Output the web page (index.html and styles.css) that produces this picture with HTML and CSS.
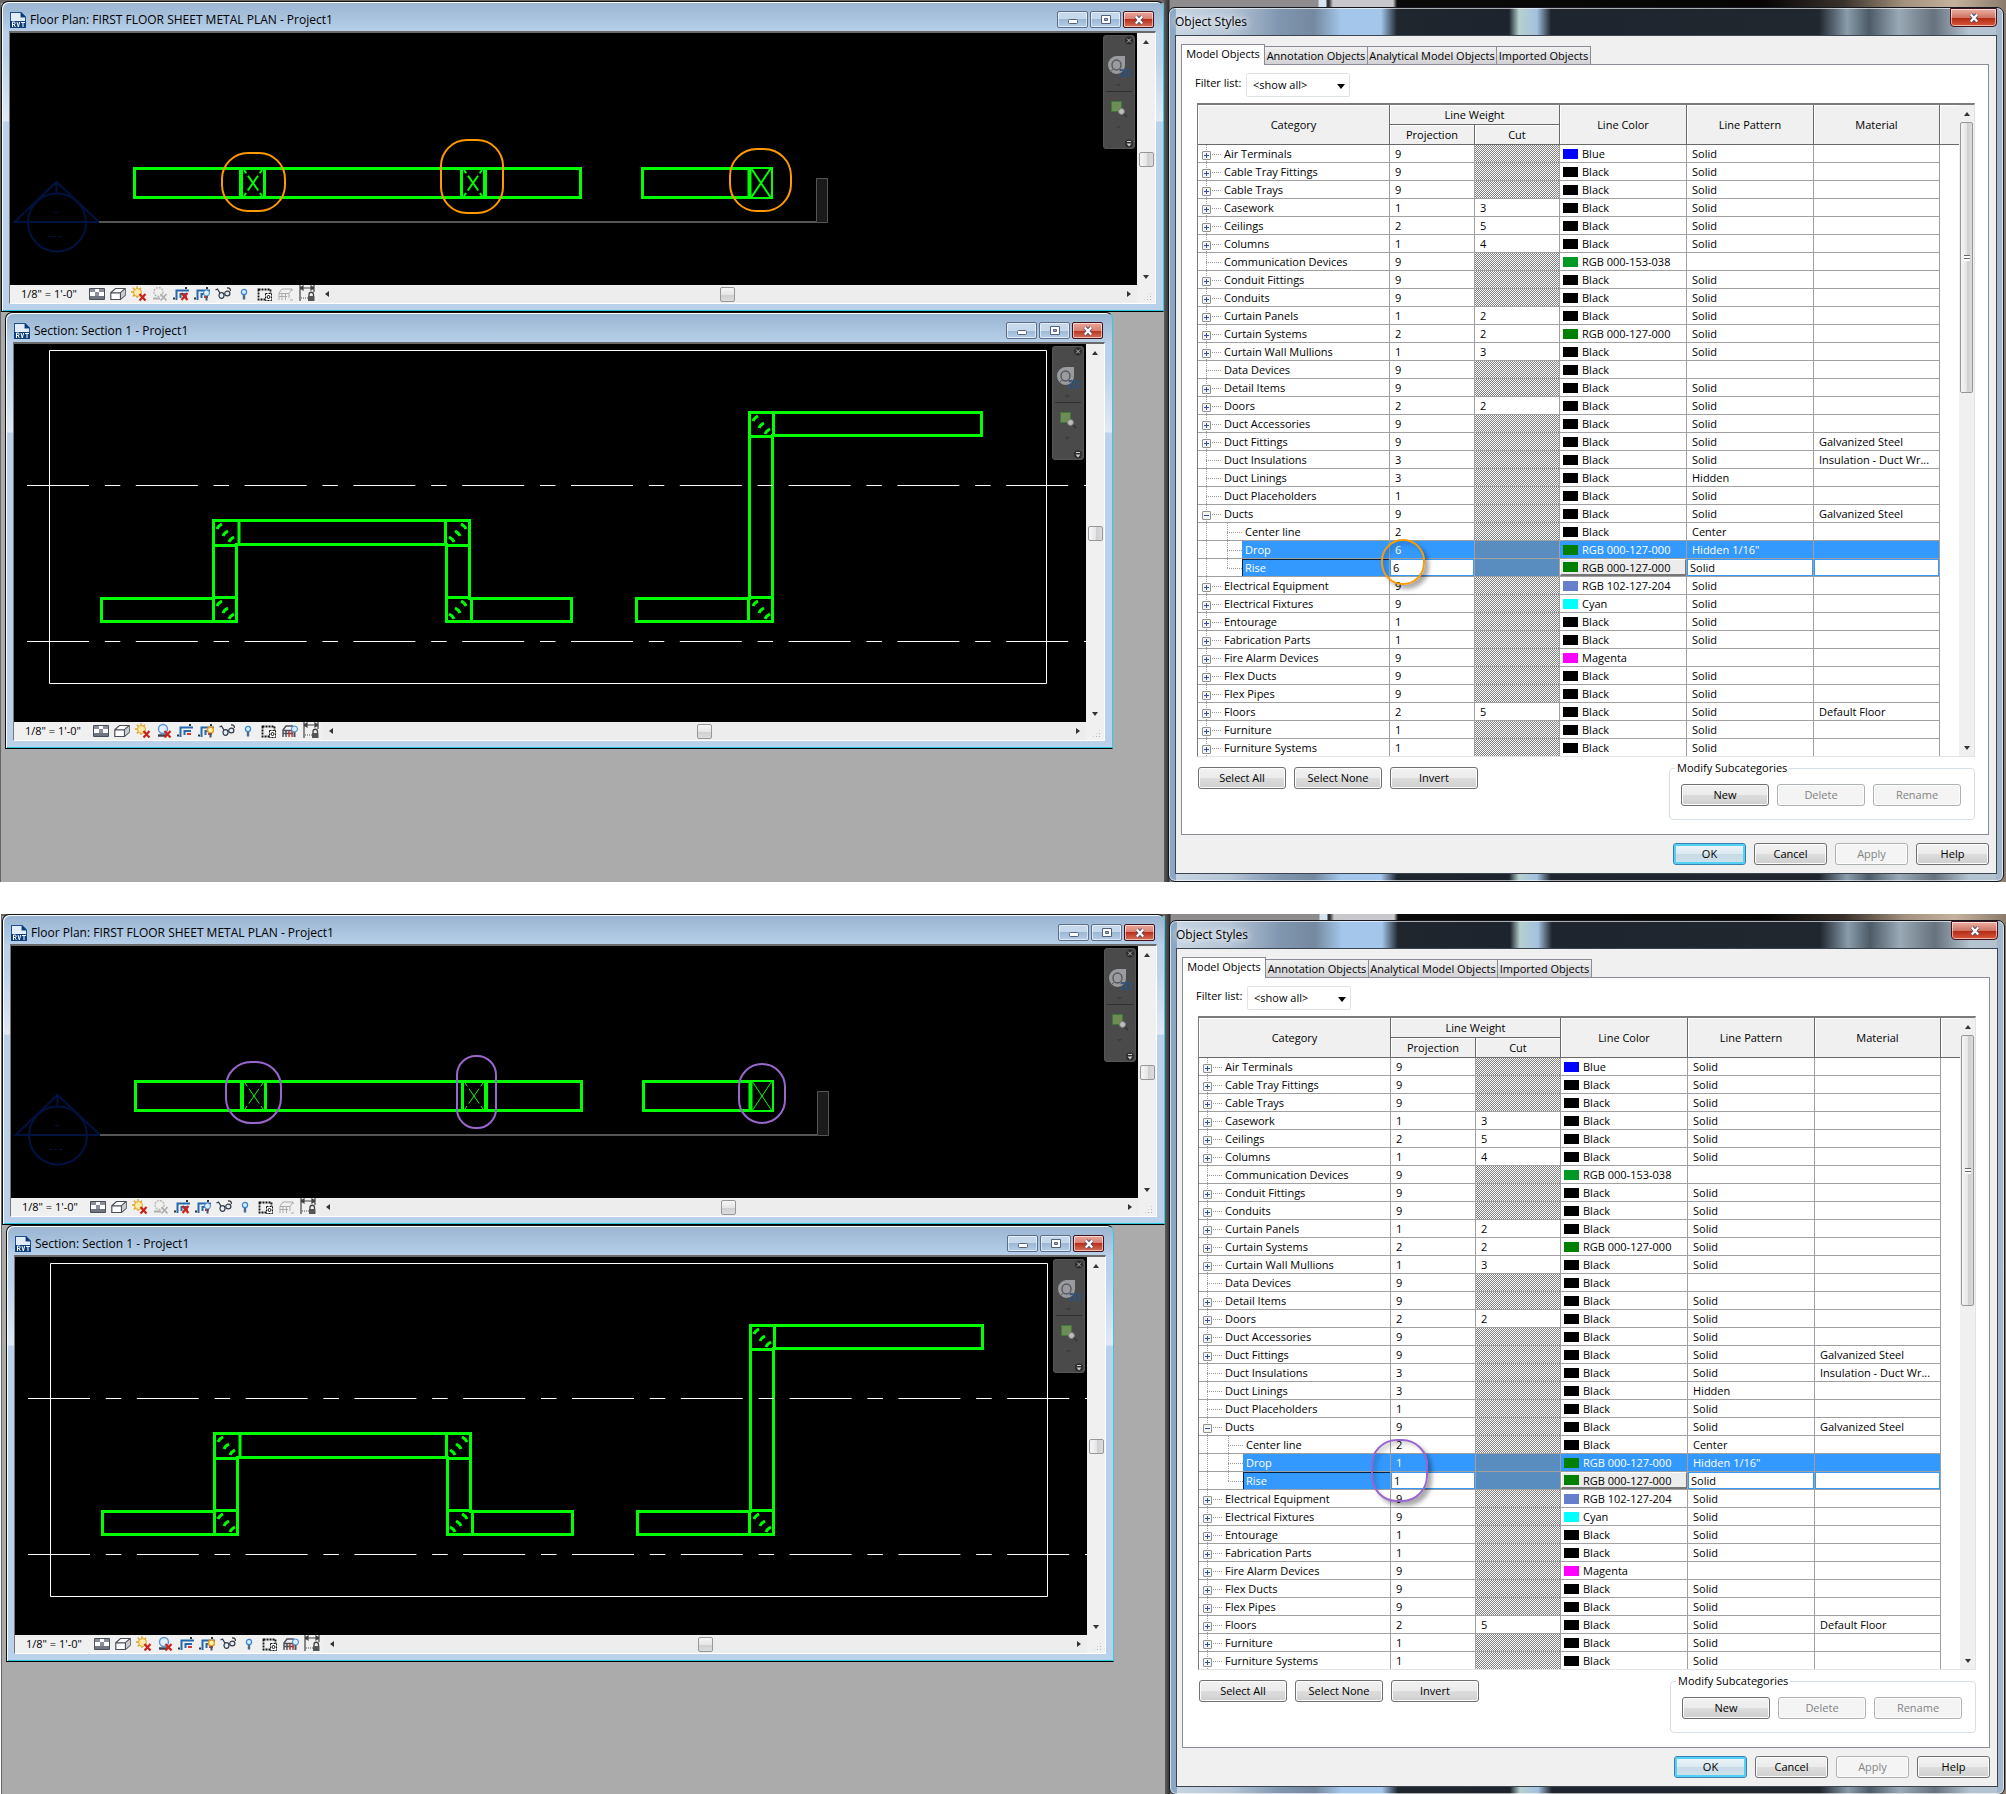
FILE: index.html
```html
<!DOCTYPE html>
<html lang="en">
<head>
<meta charset="utf-8">
<title>Object Styles - Project1</title>
<link rel="stylesheet" href="styles.css">
</head>
<body>
<svg class="defs" aria-hidden="true">
  <symbol id="i-rvt" viewBox="0 0 16 16"><path d="M0 0h11l5 5v11H0z" fill="#1c4f90"/><path d="M1 1h9.500v4.500H15V9H1z" fill="#e4eefa"/><path d="M11 0l5 5h-5z" fill="#0d3a78"/><path d="M0 9h16v7H0z" fill="#103f7e"/><path d="M2.500 15v-5h1.500q1.200 0 1.200 1.200T4 12.500H2.500M4 12.500L5.400 15M7 10l1.300 5L9.600 10M11 10.500h4M13 10.500V15" fill="none" stroke="#fff"/></symbol>
  <symbol id="i-detail" viewBox="0 0 16 16"><path d="M.5 2.500h15v11H.5z" fill="#d8dade" stroke="#4a4e58"/><path d="M1 3h5v3H1zM10 3h5v3h-5zM6 6h4v4H6z" fill="#8a8f99"/><path d="M6 3h4v3H6zM1 6h5v4H1zM10 6h5v4h-5z" fill="#fff"/><path d="M1 10h14v3H1z" fill="#70757f"/></symbol>
  <symbol id="i-cube" viewBox="0 0 16 16"><path d="M.8 6.800L5.500 2.500h9.700v6.800l-4.700 4.200H.8zM.8 6.800h9.700v6.700M10.500 6.800l4.700-4.300" fill="#fff" stroke="#4a4e58" stroke-width="1.200"/><path d="M11 7l4-3.500v5.500l-4 3.500z" fill="#c9ccd2"/></symbol>
  <symbol id="i-sun" viewBox="0 0 16 16"><path d="M6 0v3M0 6h3M1.800 1.800l2 2M10 1.800l-2 2M1.800 10.500l2-2M6 9v3" stroke="#e0a021" stroke-width="1.300"/><circle cx="6.500" cy="6.500" r="4" fill="#ffe9a6" stroke="#e0a021"/><path d="M8.500 8l6 6.500M14.500 8l-6 6.500" stroke="#c8241c" stroke-width="2.200"/></symbol>
  <symbol id="i-shadow-off" viewBox="0 0 16 16"><circle cx="6.500" cy="6" r="4.500" fill="none" stroke="#b5b5b5" stroke-width="1.300" stroke-dasharray="2 1"/><path d="M1 12.500h7M8.500 8l6 6.500M14.500 8l-6 6.500" stroke="#adadad" stroke-width="1.800"/></symbol>
  <symbol id="i-shadow" viewBox="0 0 16 16"><path d="M2 12.500h8" stroke="#3d4350" stroke-width="2.500"/><circle cx="7" cy="6" r="4.500" fill="#dfefff" stroke="#5c94cf" stroke-width="1.400"/><path d="M8.500 8l6 6.500M14.500 8l-6 6.500" stroke="#c8241c" stroke-width="2.200"/></symbol>
  <symbol id="i-crop" viewBox="0 0 16 16"><path d="M0 12.500h2M13 1v2" stroke="#333" stroke-width="2"/><path d="M3.500 14V4.500H16M7.500 12V8H14" fill="none" stroke="#2469ae" stroke-width="2"/><path d="M10 10h4v2h-4z" fill="#d33"/></symbol>
  <symbol id="i-crop-x" viewBox="0 0 16 16"><use href="#i-crop"/><path d="M8.500 7l6 7M14.500 7l-6 7" stroke="#c8241c" stroke-width="2.200"/></symbol>
  <symbol id="i-crop-bulb" viewBox="0 0 16 16"><use href="#i-crop"/><circle cx="12.500" cy="7" r="3" fill="#dcefff" stroke="#4080c0"/><path d="M12.500 10v4.500" stroke="#456" stroke-width="2"/></symbol>
  <symbol id="i-crop-on" viewBox="0 0 16 16"><use href="#i-crop"/><circle cx="12.500" cy="7" r="3" fill="#fff3b0" stroke="#e89a1a" stroke-width="1.500"/><path d="M12.500 10v4.500" stroke="#456" stroke-width="2"/></symbol>
  <symbol id="i-glasses" viewBox="0 0 16 16"><path d="M.5 4l2-1 3 5M12 2q3.500-.5 3.500 3" fill="none" stroke="#333b48" stroke-width="1.300"/><ellipse cx="6.500" cy="9.500" rx="2.500" ry="2.800" fill="#e6eef5" stroke="#333b48" stroke-width="1.200"/><ellipse cx="12.300" cy="7.500" rx="2.600" ry="2.300" fill="#e6eef5" stroke="#333b48" stroke-width="1.200"/></symbol>
  <symbol id="i-bulb" viewBox="0 0 16 16"><circle cx="8" cy="6" r="2.600" fill="#d4ecff" stroke="#3b83ca" stroke-width="1.200"/><path d="M8 9v4.500" stroke="#48698a" stroke-width="2.400"/></symbol>
  <symbol id="i-worksharing" viewBox="0 0 16 16"><path d="M1.500 3.500h12v10h-12z" fill="none" stroke="#111" stroke-width="1.800" stroke-dasharray="2 1"/><path d="M8.500 7.500h6v7h-6z" fill="#fff" stroke="#111" stroke-dasharray="2 1"/><circle cx="11.500" cy="11" r="1.500" fill="none" stroke="#111"/></symbol>
  <symbol id="i-building-off" viewBox="0 0 16 16"><path d="M1 14V7l3-4h10v2M1 7.500h10M4 7.500V14M7.500 7.500V14M11 7.500V12M1 10.500h8M11 7.500L14 3M12 14h3" fill="none" stroke="#ababab"/></symbol>
  <symbol id="i-building" viewBox="0 0 16 16"><path d="M1 14V7l3-4h7M1 7.500h10M4 7.500V14M1 10.500h10" fill="none" stroke="#4a4e58" stroke-width="1.400"/><path d="M7 7.500V14M10 8v6" stroke="#b33" stroke-width="1.400"/><circle cx="12.500" cy="6" r="3" fill="#dcefff" stroke="#3b83ca"/><path d="M12.500 9v5" stroke="#456" stroke-width="2"/></symbol>
  <symbol id="i-dim" viewBox="0 0 16 18"><path d="M1 0v16M15 0v7M1 3h14M1 3l3-2v4zM15 3l-3-2v4z" fill="#444" stroke="#444" stroke-width="1.200"/><path d="M2 13h7" stroke="#555" stroke-dasharray="1 1"/><path d="M10 11V9.500a2.200 2.200 0 014.500 0V11" fill="none" stroke="#444" stroke-width="1.300"/><path d="M9 11h6.500v5H9z" fill="#555"/></symbol>
  <symbol id="i-min" viewBox="0 0 12 12"><rect x="1.500" y="5.500" width="9" height="4" rx="1" fill="#fff" stroke="#53617a"/></symbol>
  <symbol id="i-max" viewBox="0 0 12 12"><path d="M1.500 1.500h9v8h-9z" fill="#fff" stroke="#53617a"/><path d="M4.500 4.500h3v2h-3z" fill="#9bb5d3" stroke="#53617a"/></symbol>
  <symbol id="i-close" viewBox="0 0 12 12"><path d="M3 2.500l6 7M9 2.500l-6 7" stroke="#53506a" stroke-width="4.200"/><path d="M2.800 2.500l6.400 7M9.200 2.500l-6.400 7" stroke="#fff" stroke-width="2.200"/></symbol>
  <symbol id="d-vanes" viewBox="-10 -10 20 20"><path d="M-9 -4q1-3 5-5M-3 3q1-3 5-5M3 9q1-3 5-5" fill="none" stroke="#0f0" stroke-width="3"/></symbol>
  <symbol id="d-nav" viewBox="0 0 32 114">
    <circle cx="26" cy="5.500" r="4" fill="#2c2c2c"/><path d="M24 3.500l4 4M28 3.500l-4 4" stroke="#b5b5b5"/>
    <path d="M13.500 21H22v9a8.500 8.500 0 01-8.500 9A8.500 9 0 015 30a8.500 9 0 018.500-9z" fill="#999b9e"/>
    <ellipse cx="13.500" cy="30" rx="4.500" ry="5" fill="none" stroke="#55585c" stroke-width="1.400"/><path d="M8 36l2.500-2M19 36l-2.500-2" stroke="#55585c"/>
    <path d="M13 49h5l-2.500 3zM13 91h5l-2.500 3z" fill="#3b3d46"/>
    <path d="M3 56.500h26" stroke="#2f2f2f"/>
    <path d="M8.500 66.500h10v10h-10z" fill="#6d8c56" stroke="#3e7a35"/><path d="M20 78l4 4" stroke="#383838" stroke-width="2"/><circle cx="18.500" cy="76.500" r="3" fill="#bdbdbd" stroke="#777"/>
    <circle cx="26" cy="108.500" r="4" fill="#2c2c2c"/><path d="M24 106.500h4" stroke="#ccc"/><path d="M23.500 108.500h5l-2.500 3z" fill="#ccc"/>
  </symbol>
  <symbol id="s-plan" viewBox="10 33 1127 252">
    <g fill="none" stroke="#00123f" stroke-width="2"><path d="M14.500 222H99L56.500 182zM56.500 182v12"/><circle cx="57" cy="222.500" r="29"/><path d="M54 212.500h4M48 236.500h3M53 236.500h3M58 236.500h3" stroke-width="1"/></g>
    <path d="M99 222h717" stroke="#555" stroke-width="2"/>
    <path d="M816.500 178.500h11v44h-11z" fill="#1b1b1b" stroke="#555"/>
    <path d="M134.500 168.500h446v29h-446zM642.500 168.500H748M642.500 197.500H748M642.500 167v32M264.500 169v28M461.500 169v28" fill="none" stroke="#0f0" stroke-width="3"/>
    <path d="M241 168v30M485 168v30M749.500 167v32" stroke="#0f0" stroke-width="4"/>
    <path d="M750 168h22v30h-22z" fill="none" stroke="#0f0" stroke-width="2"/>
  </symbol>
  <symbol id="s-section" viewBox="14 344 1072 378">
    <path d="M49.500 350.500h997v333h-997z" fill="none" stroke="#fff"/>
    <g fill="none" stroke="#0f0" stroke-width="3">
      <path d="M101.500 598.500H213.500V520.500H469.500V598.500H571.500V621.500H446.500V544.500H236.500V621.500H101.500z"/>
      <path d="M213.500 598v23M213.500 597.500h23M213.500 545.500h23M239 520v24M445.500 520v24M446.500 545.500h23M446.500 597.500h23M471.500 598v23"/>
      <path d="M636.500 598.500H749.500V412.500H981.500V435.500H772.500V621.500H636.500zM748.500 598v23M749 597.500h23M749 436.500h23M773.500 412v24"/>
    </g>
    <use href="#d-vanes" x="216" y="523" width="20" height="20"/><use href="#d-vanes" x="216" y="600" width="20" height="20"/>
    <use href="#d-vanes" x="752" y="415" width="20" height="20"/><use href="#d-vanes" x="752" y="600" width="20" height="20"/>
    <g transform="translate(683 0) scale(-1 1)"><use href="#d-vanes" x="216" y="523" width="20" height="20"/><use href="#d-vanes" x="216" y="600" width="20" height="20"/></g>
    <path d="M27 485.500h1059M27 641.500h1059" stroke="#fff" stroke-dasharray="62 15.800 15.500 15.500"/>
  </symbol>
</svg>
<main id="app"></main>
<script src="app.js"></script>
</body>
</html>
```
FILE: styles.css
```css
* { box-sizing: border-box; }
body { margin: 0; background: #fff; color: #000; font: 11px/16px "Open Sans", "Noto Sans", sans-serif; }
button, input, select { font: inherit; color: inherit; margin: 0; padding: 0; }
.defs { position: absolute; width: 0; height: 0; }
#app { display: flex; flex-direction: column; gap: 32px; }
.shot { overflow: hidden; }
.desktop { position: relative; height: 882px; background: linear-gradient(#6b6565 0 3px, transparent 3px), linear-gradient(90deg, #666 0 1px, transparent 1px), #ababab; }
.shot.after .desktop { height: 881px; margin: -1px -1px 0 1px; }

/* drawing windows */
.win { position: absolute; display: flex; flex-direction: column; padding: 0 7px; border: 1px solid #111; border-right-color: #3ec7dc; border-bottom: 1px solid #000; border-radius: 7px 7px 0 0; background: linear-gradient(#99b4d1, #b9d1ea 31px, #b9d1ea 50px, #e0e9f5 119px, #b9d1ea 120px); box-shadow: inset 1px 1px #fff, inset 0 -1px #28c8dc; padding-bottom: 7px; }
.plan { left: 1px; top: 1px; width: 1163px; z-index: 1; }
.section { left: 5px; top: 312px; width: 1108px; }
.titlebar { display: flex; align-items: center; gap: 2px; height: 29px; padding: 6px 2px 0 1px; }
.titlebar h2 { flex: 1; margin: 0 0 0 2px; font-size: 12px; font-weight: 400; }
.titlebar svg { display: block; }
.rvt { width: 16px; height: 16px; }
.wb { display: grid; place-items: center; width: 31px; height: 17px; border: 1px solid #5b6d89; border-radius: 2px; background: linear-gradient(#c6d8ec 0 50%, #9db8d5 50%, #b5cde7); box-shadow: inset 0 0 0 1px #ffffff90; }
.wb svg { width: 12px; height: 12px; }
.wb.close { border-color: #43121b; background: linear-gradient(#e8a598 0, #d98073 50%, #b8301c 50%, #d4705a); }
.client { border: 1px solid #fff; border-top: 2px solid #6a6a6a; border-left-color: #777; background: #f0f0f0; display: grid; grid-template-columns: 1fr 18px; }
.canvas { position: relative; background: #000; }
.canvas > svg { display: block; width: 100%; height: auto; }
.nav { position: absolute; right: 2px; top: 2px; width: 32px; height: 114px; border-radius: 4px; background: #4a4a4a; box-shadow: inset 0 0 0 1px #555; }
.nav svg { display: block; width: 32px; height: 114px; }
.nav span { position: absolute; left: 16px; top: 32px; color: #2b5280; font: 700 10px/14px "Liberation Sans", sans-serif; }
.vbar { display: flex; flex-direction: column; align-items: center; background: #f0f0f0; }
.thumb { border: 1px solid #979797; border-radius: 2px; background: linear-gradient(90deg, #f6f6f6, #e6e6e8 50%, #cfcfd2 55%, #dcdcde); }
.vbar .thumb { width: 15px; height: 15px; }
.arrow { width: 17px; height: 17px; display: grid; place-items: center; border: 0; background: none; }
.arrow::before { content: ""; border: 3px solid transparent; }
.arrow.up::before { border-bottom: 4px solid #333; border-top: 0; }
.arrow.down::before { border-top: 4px solid #333; border-bottom: 0; }
.arrow.left::before { border-right: 4px solid #333; border-left: 0; }
.arrow.right::before { border-left: 4px solid #333; border-right: 0; }
.viewbar { display: flex; align-items: center; height: 18px; padding-left: 11px; }
.scale { width: 68px; white-space: nowrap; }
.tools { display: flex; gap: 5px; width: 229px; }
.tool { width: 16px; height: 18px; border: 0; background: none; }
.tool svg { display: block; width: 16px; height: 16px; }
.tool.wide svg { height: 18px; }
.hbar { flex: 1; display: flex; align-items: center; height: 17px; background: #ededed; }
.hbar .thumb { width: 15px; height: 15px; background: linear-gradient(#f6f6f6, #e6e6e8 50%, #cfcfd2 55%, #dcdcde); }
.grip { align-self: end; justify-self: end; width: 9px; height: 9px; margin: 0 3px 2px 0; background: radial-gradient(circle, #b0b0b0 1px, transparent 1px) 0 0 / 3px 3px; clip-path: polygon(100% 0, 100% 100%, 0 100%); }

/* object styles dialog */
.behind { position: absolute; left: 1164px; right: 0; top: 0; bottom: 0; background: linear-gradient(90deg, #0005 0, #000a 5px, transparent 6px), linear-gradient(90deg, #8e8c8c 0 154px, #d5e2f0 155px 162px, #333 163px 165px, #c8c8cc 169px 229px, #0a0a0a 233px, #060504 600px, #3a322c 680px, #a2917e 740px, #c4b29d 790px, #8a7a6b); }
.dialog { position: absolute; left: 1168px; right: 2px; top: 7px; display: flex; flex-direction: column; padding: 0 6px 7px 6px; border: 1px solid #14181e; border-radius: 7px; box-shadow: inset 0 0 0 1px #ffffffa0; background: linear-gradient(90deg, #8ba7c2 0 7px, transparent 7px calc(100% - 7px), #a4b7ca calc(100% - 7px)), linear-gradient(90deg, #c9d6e3 0, #b5c5d6 60px, #8096b0 110px, #74899f 145px, #a3c6ea 172px, #a3c6ea 212px, #1f262e 228px, #1d242d 340px, #b6d0cf 350px, #a4c1de 368px, #1e252e 382px, #20272f 650px, #8a9cab 678px, #4d5b67 700px, #9aa9b6 730px, #66727d 765px, #b4c3d0 800px); }
.dialog-title { display: flex; justify-content: space-between; align-items: center; height: 27px; }
.dialog-title h2 { margin: 0; font-size: 12px; font-weight: 400; text-shadow: 0 0 6px #fff, 0 0 9px #fff; }
.dialog-title .wb { width: 47px; height: 19px; align-self: flex-start; border-radius: 0 0 4px 4px; background: linear-gradient(#eab0a4 0, #d07565 50%, #b02a12 50%, #d8553a); }
.panel { border: 1px solid #3c4652; background: #f0f0f0; padding: 7px 7px 8px 5px; }
.tabs { display: flex; align-items: flex-end; height: 21px; padding: 0; }
.tab { height: 18px; padding: 0; border: 1px solid #898c95; border-left: 0; border-bottom: 0; background: linear-gradient(#f2f2f2, #e2e2e4 50%, #d2d2d6); white-space: nowrap; position: relative; }
.tab.on { width: 84px; height: 21px; border-left: 1px solid #898c95; background: #fff; margin-bottom: -1px; z-index: 1; padding-bottom: 3px; }
.t2 { width: 103px; } .t3 { width: 129px; } .t4 { width: 94px; }
.page { display: flex; flex-direction: column; border: 1px solid #898c95; background: #fff; padding: 8px 13px 14px 15px; }
.filter { display: flex; align-items: center; gap: 10px; height: 24px; }
.filter label { margin: -4px 0 0 -2px; width: 41px; white-space: nowrap; }
.filter select { appearance: none; width: 104px; height: 24px; padding-left: 6px; border: 1px solid #dfe3ea; border-radius: 2px; background: #fff; }
.filter .pick { position: relative; }
.filter .pick::after { content: ""; position: absolute; right: 5px; top: 11px; border: 4px solid transparent; border-top: 5px solid #000; border-bottom: 0; pointer-events: none; }
.gridframe { display: flex; margin-top: 6px; border: 2px solid #7b7b7b; border-width: 2px 1px 1px 1px; border-right-color: #e3e3e3; border-bottom-color: #e3e3e3; position: relative; }
table { flex: 1; table-layout: fixed; border-collapse: separate; border-spacing: 0; width: 0; }
.c-cat { width: 192px; } .c-w { width: 85px; } .c-col { width: 127px; } .c-mat { width: 126px; }
th { height: 20px; padding: 0; font-weight: 400; line-height: 18px; background: #f0f0f0; border-right: 1px solid #696969; border-bottom: 1px solid #696969; box-shadow: inset 1px 1px #fff; }
th.tail { border-right: 0; }
td { height: 18px; padding: 0 0 0 5px; line-height: 17px; border-right: 1px solid #a0a0a0; border-bottom: 1px solid #a0a0a0; white-space: nowrap; overflow: hidden; text-overflow: ellipsis; }
tr:last-child td { border-bottom: 0; height: 17px; }
td.tail { border: 0; }
td.cat { padding: 0; }
.node { display: flex; align-items: center; height: 17px; padding-left: 8px; background: repeating-linear-gradient(#999 0 1px, #fff 1px 2px) 8px 0 / 1px 100% no-repeat; }
.node.kid { padding-left: 29px; background: repeating-linear-gradient(#999 0 1px, #fff 1px 2px) 8px 0 / 1px 100% no-repeat, repeating-linear-gradient(#999 0 1px, #fff 1px 2px) 29px 0 / 1px 100% no-repeat; }
.node.end { background-size: 1px 100%, 1px 9px; }
.exp { width: 9px; height: 9px; margin: 3px 0 0 -4px; border: 1px solid #919191; border-radius: 1px; background: linear-gradient(#2b4f9c, #2b4f9c) center / 5px 1px no-repeat, linear-gradient(#2b4f9c, #2b4f9c) center / 1px 5px no-repeat, #f4f4f4; }
.exp.open { background: linear-gradient(#2b4f9c, #2b4f9c) center / 5px 1px no-repeat, #f4f4f4; }
.dots { flex: 1; max-width: 15px; height: 1px; margin: 2px 0 0; background: repeating-linear-gradient(90deg, #999 0 1px, #fff 1px 2px); }
.exp + .dots { max-width: 10px; margin-left: 1px; }
.name { padding-left: 3px; flex: 1; }
.exp ~ .name { padding-left: 2px; }
td.na { background: repeating-conic-gradient(#808080 0 25%, #fff 0 50%) 0 0 / 2px 2px; }
.color { padding-left: 3px; }
.color span, .color button { display: flex; align-items: center; gap: 4px; width: 100%; }
.color i { width: 15px; height: 10px; background: var(--c); }
.sel .name, .sel td.fill { background: #39f; color: #fff; }
.sel td.na { background: repeating-conic-gradient(#808080 0 25%, #39f 0 50%) 0 0 / 2px 2px; }
.edit .name { height: 17px; box-shadow: inset 1px 1px #024; }
.edit td { padding: 0; }
.edit input { display: block; width: 100%; height: 17px; border: 1px solid #39f; padding: 0 0 0 2px; background: #fff; outline: 1px solid #39f; outline-offset: 0; }
.edit .color button { height: 17px; padding: 0 0 0 2px; border: 1px solid #fff; border-right-color: #777; border-bottom: 2px solid #777; background: #ececec; color: #000; }
.vscroll { display: flex; flex-direction: column; align-items: center; width: 15px; background: #f0f0f0; }
.vscroll .thumb { width: 13px; height: 271px; display: grid; place-items: center; }
.vscroll .thumb::before { content: ""; width: 6px; height: 6px; background: repeating-linear-gradient(#666 0 1px, #fff 1px 3px); }
.spring { flex: 1; }
.ring { position: absolute; border: 2px solid #f90; box-shadow: 4px 4px 4px #0005, inset 4px 4px 4px #0002; pointer-events: none; }
.ring.orange { left: 183px; top: 434px; width: 44px; height: 46px; border-radius: 22px; }
.ring.purple { left: 172px; top: 421px; width: 57px; height: 63px; border-radius: 26px; border-color: #96c; }
.actions { display: flex; justify-content: space-between; padding: 10px 0 0 1px; }
.row { display: flex; gap: 8px; }
.btn { width: 88px; height: 22px; border: 1px solid #707070; border-radius: 3px; background: linear-gradient(#f2f2f2, #ebebeb 50%, #ddd 50%, #cfcfcf); box-shadow: inset 0 0 0 1px #fcfcfc; line-height: 18px; }
.btn:disabled { border-color: #adb2b5; background: #f4f4f4; color: #838383; }
.group { width: 306px; min-width: 0; height: 60px; margin: -7px 0 0; padding: 8px 12px 0 11px; border: 1px solid #d5dfe5; border-radius: 4px; }
.group legend { margin-left: -6px; padding: 0 2px; line-height: 16px; }
.footer { display: flex; justify-content: flex-end; gap: 8px; padding-top: 8px; }
.footer .btn { width: 73px; }
.footer .ok { border-color: #3c7fb1; box-shadow: inset 0 0 0 2px #55d0f5; background: linear-gradient(#eef5f9, #dceaf2 50%, #c8dae5 50%, #cfe2ec); }
```
FILE: app.js
```js
const K = ['#000', 'Black'], G = ['#007f00', 'RGB 000-127-000'];
// kind: + collapsed, - expanded, . leaf, k child
const rows = [
  ['+', 'Air Terminals', 9, '', ['#00f', 'Blue'], 'Solid'],
  ['+', 'Cable Tray Fittings', 9, '', K, 'Solid'],
  ['+', 'Cable Trays', 9, '', K, 'Solid'],
  ['+', 'Casework', 1, 3, K, 'Solid'],
  ['+', 'Ceilings', 2, 5, K, 'Solid'],
  ['+', 'Columns', 1, 4, K, 'Solid'],
  ['.', 'Communication Devices', 9, '', ['#009926', 'RGB 000-153-038'], ''],
  ['+', 'Conduit Fittings', 9, '', K, 'Solid'],
  ['+', 'Conduits', 9, '', K, 'Solid'],
  ['+', 'Curtain Panels', 1, 2, K, 'Solid'],
  ['+', 'Curtain Systems', 2, 2, G, 'Solid'],
  ['+', 'Curtain Wall Mullions', 1, 3, K, 'Solid'],
  ['.', 'Data Devices', 9, '', K, ''],
  ['+', 'Detail Items', 9, '', K, 'Solid'],
  ['+', 'Doors', 2, 2, K, 'Solid'],
  ['+', 'Duct Accessories', 9, '', K, 'Solid'],
  ['+', 'Duct Fittings', 9, '', K, 'Solid', 'Galvanized Steel'],
  ['.', 'Duct Insulations', 3, '', K, 'Solid', 'Insulation - Duct Wr...'],
  ['.', 'Duct Linings', 3, '', K, 'Hidden'],
  ['.', 'Duct Placeholders', 1, '', K, 'Solid'],
  ['-', 'Ducts', 9, '', K, 'Solid', 'Galvanized Steel'],
  ['k', 'Center line', 2, '', K, 'Center'],
  ['k', 'Drop', 'w', '', G, 'Hidden 1/16"'],
  ['k', 'Rise', 'w', '', G, 'Solid'],
  ['+', 'Electrical Equipment', 9, '', ['#667fcc', 'RGB 102-127-204'], 'Solid'],
  ['+', 'Electrical Fixtures', 9, '', ['#0ff', 'Cyan'], 'Solid'],
  ['+', 'Entourage', 1, '', K, 'Solid'],
  ['+', 'Fabrication Parts', 1, '', K, 'Solid'],
  ['+', 'Fire Alarm Devices', 9, '', ['#f0f', 'Magenta'], ''],
  ['+', 'Flex Ducts', 9, '', K, 'Solid'],
  ['+', 'Flex Pipes', 9, '', K, 'Solid'],
  ['+', 'Floors', 2, 5, K, 'Solid', 'Default Floor'],
  ['+', 'Furniture', 1, '', K, 'Solid'],
  ['+', 'Furniture Systems', 1, '', K, 'Solid'],
];

const use = (id, cls = '') => `<svg class="${cls}" aria-hidden="true"><use href="#${id}"/></svg>`;

function row([kind, name, proj, cut, [hex, color], pattern, material = ''], weight) {
  const sel = proj === 'w', edit = name === 'Rise';
  const exp = kind === '+' || kind === '-' ? `<button class="exp ${kind === '-' ? 'open' : ''}" aria-label="Toggle ${name}"></button>` : '';
  const node = `<div class="node ${kind === 'k' ? 'kid' : ''} ${edit ? 'end' : ''}">${exp}<span class="dots"></span><span class="name">${name}</span></div>`;
  const sw = `<i style="--c:${hex}"></i>${color}`;
  const w = sel ? weight : proj;
  const text = (v, label) => edit ? `<td><input value="${v}" aria-label="${label}"></td>` : `<td class="fill">${v}</td>`;
  return `<tr class="${sel ? 'sel' : ''} ${edit ? 'edit' : ''}"><td class="cat">${node}</td>${text(w, 'Projection')}
    <td class="${cut === '' ? 'na' : ''}">${cut}</td><td class="color fill">${edit ? `<button>${sw}</button>` : `<span>${sw}</span>`}</td>
    ${text(pattern.replace('"', '&quot;'), 'Line pattern')}${text(material, 'Material')}<td class="tail"></td></tr>`;
}

function drawingWindow(cls, title, box, vRatio, hRatio, icons, overlay) {
  const [x, y, w, h] = box.split(' ');
  return `<section class="win ${cls}">
    <header class="titlebar">${use('i-rvt', 'rvt')}<h2>${title}</h2>
      <button class="wb" aria-label="Minimize">${use('i-min')}</button><button class="wb" aria-label="Maximize">${use('i-max')}</button><button class="wb close" aria-label="Close">${use('i-close')}</button></header>
    <div class="client">
      <div class="canvas"><svg viewBox="${box}"><use href="#s-${cls}" x="${x}" y="${y}" width="${w}" height="${h}"/>${overlay}</svg>
        <div class="nav">${use('d-nav')}<span>2D</span></div></div>
      <div class="vbar"><button class="arrow up" aria-label="Scroll up"></button><span style="flex:${vRatio[0]}"></span><span class="thumb"></span><span style="flex:${vRatio[1]}"></span><button class="arrow down" aria-label="Scroll down"></button></div>
      <div class="viewbar"><span class="scale">1/8" = 1'-0"</span><div class="tools">${icons.map(i => `<button class="tool ${i === 'dim' ? 'wide' : ''}" aria-label="${i}">${use('i-' + i)}</button>`).join('')}</div>
        <div class="hbar"><button class="arrow left" aria-label="Scroll left"></button><span style="flex:${hRatio[0]}"></span><span class="thumb"></span><span style="flex:${hRatio[1]}"></span><button class="arrow right" aria-label="Scroll right"></button></div></div>
      <span class="grip"></span>
    </div></section>`;
}

function scene({ id, weight, ring, color, lineWidth, marks }) {
  const d = (x1, x2, y1, y2, dash) => `<path d="M${x1} ${y1}L${x2} ${y2}M${x2} ${y1}L${x1} ${y2}" stroke="#0f0" stroke-width="${lineWidth}" ${dash ? 'stroke-dasharray="4 3 18 3 4 0"' : ''}/>`;
  const overlay = d(244, 262, 170, 196, true) + d(464, 482, 170, 196, true) + d(751, 771, 168, 198) +
    marks.map(([x, y, w, h, r]) => `<rect x="${x}" y="${y}" width="${w}" height="${h}" rx="${r}" fill="none" stroke="${color}" stroke-width="2"/>`).join('');
  const common = ['glasses', 'bulb', 'worksharing'];
  return `<section class="shot ${id}"><div class="desktop">
    ${drawingWindow('plan', 'Floor Plan: FIRST FLOOR SHEET METAL PLAN - Project1', '10 33 1127 252', [101, 101], [385, 386], ['detail', 'cube', 'sun', 'shadow-off', 'crop-x', 'crop-bulb', ...common, 'building-off', 'dim'], overlay)}
    ${drawingWindow('section', 'Section: Section 1 - Project1', '14 344 1072 378', [165, 164], [358, 357], ['detail', 'cube', 'sun', 'shadow', 'crop', 'crop-on', ...common, 'building', 'dim'], '')}
    <div class="behind"></div>
    <section class="dialog">
      <header class="dialog-title"><h2>Object Styles</h2><button class="wb close" aria-label="Close">${use('i-close')}</button></header>
      <div class="panel">
        <div class="tabs" role="tablist"><button role="tab" class="tab on">Model Objects</button><button role="tab" class="tab t2">Annotation Objects</button><button role="tab" class="tab t3">Analytical Model Objects</button><button role="tab" class="tab t4">Imported Objects</button></div>
        <div class="page">
          <div class="filter"><label for="filter-${id}">Filter list:</label><span class="pick"><select id="filter-${id}"><option>&lt;show all&gt;</option></select></span></div>
          <div class="gridframe">
            <table><colgroup><col class="c-cat"><col class="c-w"><col class="c-w"><col class="c-col"><col class="c-col"><col class="c-mat"><col></colgroup>
              <thead><tr><th rowspan="2">Category</th><th colspan="2">Line Weight</th><th rowspan="2">Line Color</th><th rowspan="2">Line Pattern</th><th rowspan="2">Material</th><th rowspan="2" class="tail"></th></tr><tr><th>Projection</th><th>Cut</th></tr></thead>
              <tbody>${rows.map(r => row(r, weight)).join('')}</tbody></table>
            <div class="vscroll"><button class="arrow up" aria-label="Scroll up"></button><span class="thumb"></span><span class="spring"></span><button class="arrow down" aria-label="Scroll down"></button></div>
            <span class="ring ${ring}"></span>
          </div>
          <div class="actions"><div class="row"><button class="btn">Select All</button><button class="btn">Select None</button><button class="btn">Invert</button></div>
            <fieldset class="group"><legend>Modify Subcategories</legend><div class="row"><button class="btn">New</button><button class="btn" disabled>Delete</button><button class="btn" disabled>Rename</button></div></fieldset></div>
        </div>
        <div class="footer"><button class="btn ok">OK</button><button class="btn">Cancel</button><button class="btn" disabled>Apply</button><button class="btn">Help</button></div>
      </div>
    </section></div></section>`;
}

document.getElementById('app').innerHTML =
  scene({ id: 'before', weight: 6, ring: 'orange', color: '#f90', lineWidth: 2, marks: [[222, 153, 63, 58, 26], [441, 140, 62, 73, 26], [730, 149, 61, 62, 27]] }) +
  scene({ id: 'after', weight: 1, ring: 'purple', color: '#96c', lineWidth: 1, marks: [[225, 149, 55, 61, 25], [456, 143, 39, 72, 19], [738, 151, 46, 59, 23]] });
```
